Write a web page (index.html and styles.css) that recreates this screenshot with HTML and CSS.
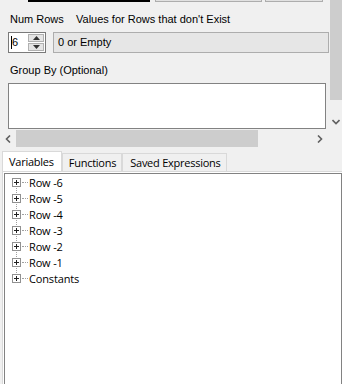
FILE: index.html
```html
<!DOCTYPE html>
<html>
<head>
<meta charset="utf-8">
<link rel="stylesheet" href="styles.css">
</head>
<body>
<div class="upper">
  <div class="main">
    <div class="btnstrip"><span class="b1"></span><span class="b2"></span><span class="b3"></span></div>
    <div class="labels"><span class="lbl num">Num Rows</span><span class="lbl">Values for Rows that don't Exist</span></div>
    <div class="inputs">
      <div class="spin">
        <span class="val"><span class="caret"></span>6</span>
        <span class="arrows">
          <span class="sbtn"><svg width="7" height="4" viewBox="0 0 7 4"><path d="M0 4 L3.5 0 L7 4 Z" fill="#333"/></svg></span>
          <span class="sbtn"><svg width="7" height="4" viewBox="0 0 7 4"><path d="M0 0 L3.5 4 L7 0 Z" fill="#333"/></svg></span>
        </span>
      </div>
      <div class="combo">0 or Empty</div>
    </div>
    <div class="lbl group">Group By (Optional)</div>
    <div class="textarea"></div>
    <div class="hscroll">
      <span class="harr"><svg width="6" height="8" viewBox="0 0 6 8"><path d="M5 0.5 L1.5 4 L5 7.5" fill="none" stroke="#606060" stroke-width="1.6"/></svg></span>
      <span class="hthumb"></span>
      <span class="htrack"><svg width="6" height="8" viewBox="0 0 6 8"><path d="M1 0.5 L4.5 4 L1 7.5" fill="none" stroke="#606060" stroke-width="1.6"/></svg></span>
    </div>
  </div>
  <div class="vscroll">
    <div class="vthumb"></div>
    <div class="vtrack"><svg width="8" height="6" viewBox="0 0 8 6"><path d="M0.5 1 L4 4.5 L7.5 1" fill="none" stroke="#606060" stroke-width="1.6"/></svg></div>
    <div class="corner"></div>
  </div>
</div>
<div class="lower">
  <div class="tabs">
    <div class="tab active">Variables</div>
    <div class="tab">Functions</div>
    <div class="tab">Saved Expressions</div>
  </div>
  <div class="panel">
    <div class="tree">
      <div class="node"><span class="box"></span><span class="dash"></span><span class="txt">Row -6</span></div>
      <div class="node"><span class="box"></span><span class="dash"></span><span class="txt">Row -5</span></div>
      <div class="node"><span class="box"></span><span class="dash"></span><span class="txt">Row -4</span></div>
      <div class="node"><span class="box"></span><span class="dash"></span><span class="txt">Row -3</span></div>
      <div class="node"><span class="box"></span><span class="dash"></span><span class="txt">Row -2</span></div>
      <div class="node"><span class="box"></span><span class="dash"></span><span class="txt">Row -1</span></div>
      <div class="node last"><span class="box"></span><span class="dash"></span><span class="txt">Constants</span></div>
    </div>
  </div>
</div>
</body>
</html>
```

FILE: styles.css
```css
html, body {
  margin: 0;
  padding: 0;
  width: 342px;
  height: 384px;
  overflow: hidden;
  background: #f0f0f0;
}

.upper {
  display: flex;
  height: 147px;
}

.main {
  width: 329px;
  display: flex;
  flex-direction: column;
  overflow: hidden;
  background: #f0f0f0;
}

.btnstrip {
  display: flex;
  height: 3px;
}
.b1 {
  margin-left: 28px;
  width: 122px;
  height: 2px;
  background: #000;
}
.b2 {
  margin-left: 5px;
  width: 105px;
  height: 1px;
  background: #e1e1e1;
  border-bottom: 1px solid #adadad;
  border-left: 1px solid #adadad;
  border-right: 1px solid #adadad;
}
.b3 {
  margin-left: 3px;
  width: 56px;
  height: 1px;
  background: #e1e1e1;
  border-bottom: 1px solid #adadad;
  border-left: 1px solid #adadad;
  border-right: 1px solid #adadad;
}

.lbl {
  font-family: "Liberation Sans", Arial, sans-serif;
  font-size: 11px;
  line-height: 13px;
  color: #000;
  white-space: nowrap;
}

.labels {
  display: flex;
  margin-top: 10px;
  padding-left: 10px;
}
.num {
  width: 66px;
}

.inputs {
  display: flex;
  margin-top: 6px;
  height: 21px;
  padding-left: 8px;
}

.spin {
  width: 55px;
  height: 19px;
  border: 1px solid #7a7a7a;
  background: #fff;
  display: flex;
  justify-content: space-between;
}
.val {
  display: flex;
  align-items: center;
  padding-left: 2px;
  font-family: "Liberation Sans", Arial, sans-serif;
  font-size: 11px;
  color: #000;
}
.caret {
  width: 1px;
  height: 13px;
  background: #000;
}
.arrows {
  display: flex;
  flex-direction: column;
  width: 16px;
  margin: 1px 1px 1px 0;
  gap: 1px;
}
.sbtn {
  flex: 1;
  background: #e5e5e5;
  border: 1px solid #b0b0b0;
  display: flex;
  align-items: center;
  justify-content: center;
}

.combo {
  margin-left: 7px;
  flex: 1;
  min-width: 270px;
  height: 19px;
  border: 1px solid #adadad;
  background: #e6e6e6;
  font-family: "Liberation Sans", Arial, sans-serif;
  font-size: 11px;
  line-height: 19px;
  padding-left: 4px;
  color: #000;
  white-space: nowrap;
}

.group {
  margin-top: 11px;
  padding-left: 10px;
}

.textarea {
  margin-top: 6px;
  margin-left: 8px;
  width: 316px;
  height: 45px;
  border: 1px solid #828282;
  background: #fff;
}

.hscroll {
  margin-top: 1px;
  height: 17px;
  display: flex;
  background: #f0f0f0;
}
.harr {
  width: 16px;
  display: flex;
  align-items: center;
  justify-content: center;
}
.hthumb {
  width: 242px;
  height: 17px;
  background: #cdcdcd;
}
.htrack {
  flex: 1;
  display: flex;
  align-items: center;
  justify-content: flex-end;
  padding-right: 6px;
}

.vscroll {
  width: 13px;
  display: flex;
  flex-direction: column;
  background: #f0f0f0;
}
.vthumb {
  height: 100px;
  background: #cdcdcd;
  margin-left: 1px;
}
.vtrack {
  height: 30px;
  display: flex;
  align-items: flex-end;
  justify-content: center;
  padding-bottom: 5px;
  box-sizing: border-box;
}
.corner {
  height: 17px;
}

.lower {
  padding-top: 4px;
}

.tabs {
  display: flex;
  align-items: flex-end;
  padding-left: 2px;
  height: 20px;
}
.tab {
  font-family: "Open Sans", "Noto Sans", sans-serif;
  font-size: 11px;
  letter-spacing: -0.25px;
  line-height: 17px;
  height: 17px;
  border: 1px solid #d9d9d9;
  border-bottom: none;
  background: #f0f0f0;
  padding: 0 5px 0 6px;
  color: #000;
  white-space: nowrap;
}
.tab.active {
  height: 19px;
  line-height: 19px;
  background: #fff;
  padding: 0 7px 0 6px;
}
.tab:nth-child(3) {
  padding-left: 7px;
  padding-right: 5px;
}

.panel {
  margin-left: 2px;
  width: 338px;
  height: 212px;
  border: 1px solid #d9d9d9;
  border-bottom: none;
  background: #fff;
  padding: 1px 1px 0 1px;
}

.tree {
  height: 211px;
  border: 1px solid #828282;
  border-bottom: none;
  background: #fff;
  padding-left: 7px;
}

.node {
  height: 16px;
  display: flex;
  align-items: center;
}
.box {
  width: 7px;
  height: 7px;
  border: 1px solid #919191;
  background:
    linear-gradient(#222, #222) center / 5px 1px no-repeat,
    linear-gradient(#222, #222) center / 1px 5px no-repeat,
    #fff;
  position: relative;
}
.node:not(.last) .box::after {
  content: "";
  position: absolute;
  left: 3px;
  top: 9px;
  height: 7px;
  border-left: 1px dotted #a0a0a0;
}
.dash {
  width: 6px;
  margin-left: 1px;
  border-top: 1px dotted #a0a0a0;
}
.txt {
  margin-left: 1px;
  font-family: "Open Sans", "Noto Sans", sans-serif;
  font-size: 11px;
  letter-spacing: -0.15px;
  color: #000;
  white-space: nowrap;
}
```
